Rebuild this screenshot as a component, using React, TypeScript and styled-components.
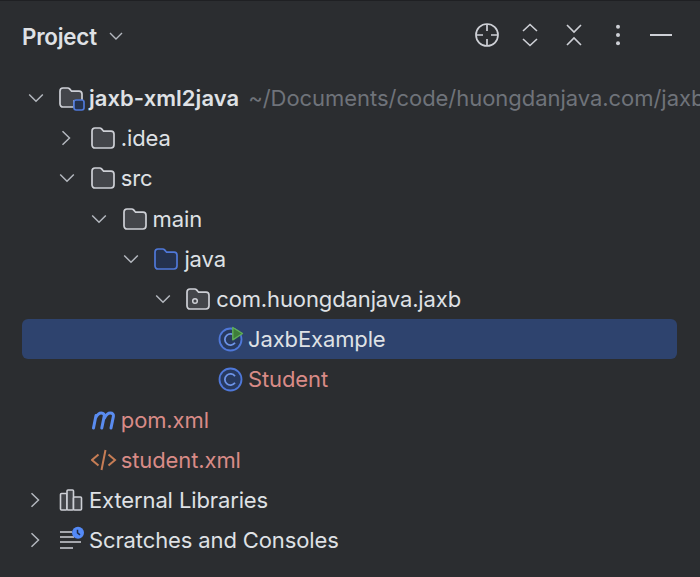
import React from "react";
import styled, { createGlobalStyle } from "styled-components";

const GlobalStyle = createGlobalStyle`
  html, body {
    margin: 0;
    padding: 0;
    height: 100%;
    overflow: hidden;
    background: #2b2d30;
  }
`;

const Panel = styled.div`
  width: 700px;
  height: 577px;
  overflow: hidden;
  background: #2b2d30;
  border-top: 1px solid #1f2023;
  box-sizing: border-box;
  font-family: Inter, "Liberation Sans", sans-serif;
  color: #dfe1e5;
`;

const Header = styled.div`
  display: flex;
  align-items: center;
  height: 70px;
  padding: 0 17px 0 22px;
`;

const Title = styled.div`
  font-size: 22.3px;
  font-weight: 600;
  letter-spacing: -0.2px;
`;

const TitleChevron = styled.div`
  display: flex;
  margin-left: 12px;
  color: #b4b8bf;
`;

const Toolbar = styled.div`
  display: flex;
  align-items: center;
  margin-left: auto;
  margin-bottom: 2px;
  color: #ced0d6;
`;

const ToolButton = styled.div`
  display: flex;
  align-items: center;
  justify-content: center;
  width: 43.6px;
  height: 30px;
`;

const Tree = styled.div`
  display: flex;
  flex-direction: column;
  margin: 7px 23px 0 22px;
`;

const Row = styled.div<{ $depth: number; $selected?: boolean }>`
  display: flex;
  align-items: center;
  height: 40.2px;
  flex-shrink: 0;
  padding-left: ${(p) => 3.5 + p.$depth * 31.8}px;
  border-radius: 6px;
  white-space: nowrap;
  background: ${(p) => (p.$selected ? "#2e436e" : "transparent")};
`;

const ChevronSlot = styled.div`
  display: flex;
  justify-content: center;
  align-items: center;
  flex-shrink: 0;
  width: 20px;
  height: 20px;
  margin-right: 13.5px;
  color: #b4b8bf;
`;

const IconSlot = styled.div`
  display: flex;
  align-items: center;
  justify-content: flex-start;
  width: 30px;
  height: 30px;
  flex-shrink: 0;
`;

const Label = styled.span<{ $tone?: "normal" | "red"; $bold?: boolean }>`
  flex-shrink: 0;
  font-size: 22px;
  letter-spacing: ${(p) => (p.$bold ? "0.05px" : "-0.12px")};
  font-weight: ${(p) => (p.$bold ? 600 : 400)};
  color: ${(p) => (p.$tone === "red" ? "#d98b87" : "#dfe1e5")};
`;

const Hint = styled.span`
  flex-shrink: 0;
  margin-left: 9px;
  font-size: 22px;
  letter-spacing: -0.04px;
  color: #6f737a;
`;

const Open = () => (
  <svg width="16" height="16" viewBox="0 0 16 16" fill="none" stroke="currentColor" strokeWidth="1.5">
    <path d="M1.2 4.500 8 11.200 14.800 4.500" />
  </svg>
);

const Closed = () => (
  <svg width="16" height="16" viewBox="0 0 16 16" fill="none" stroke="currentColor" strokeWidth="1.5">
    <path d="M3.500 1.200 10.500 8 3.500 14.800" />
  </svg>
);

const Folder = ({ stroke = "#ced0d6", fill = "#43454a" }: { stroke?: string; fill?: string }) => (
  <svg width="24" height="22" viewBox="0 0 24 22" fill={fill} stroke={stroke} strokeWidth="1.7">
    <path d="M1 4.200C1 2.400 2.200 1 4 1h4.600c.8 0 1.500.3 2 .9l2 2.300H20c1.800 0 3 1.300 3 3v10.600c0 1.800-1.200 3.200-3 3.200H4c-1.800 0-3-1.400-3-3.200Z" />
  </svg>
);

const ModuleFolder = () => (
  <svg width="26" height="26" viewBox="0 0 26 26">
    <path
      d="M1 6.200C1 4.400 2.200 3 4 3h4.600c.8 0 1.500.3 2 .9l2 2.300H20c1.800 0 3 1.300 3 3v6.800h-8v6H4c-1.800 0-3-1.400-3-3.200Z"
      fill="#43454a"
      stroke="#ced0d6"
      strokeWidth="1.700"
    />
    <rect x="15" y="15" width="10" height="10" rx="2.200" fill="#25324d" stroke="#4f78d9" strokeWidth="1.700" />
  </svg>
);

const PackageFolder = () => (
  <svg width="24" height="22" viewBox="0 0 24 22">
    <path
      d="M1 4.200C1 2.400 2.200 1 4 1h4.600c.8 0 1.500.3 2 .9l2 2.300H20c1.800 0 3 1.300 3 3v10.600c0 1.800-1.200 3.200-3 3.200H4c-1.800 0-3-1.400-3-3.200Z"
      fill="#43454a"
      stroke="#ced0d6"
      strokeWidth="1.700"
    />
    <circle cx="9" cy="13" r="2.300" fill="none" stroke="#ced0d6" strokeWidth="1.500" />
  </svg>
);

const ClassIcon = ({ run }: { run?: boolean }) => (
  <svg width="28" height="28" viewBox="0 0 28 28" fill="none" style={{ overflow: "visible" }}>
    <circle cx="12.500" cy="14.500" r="11" fill="#27395f" stroke="#4f78d9" strokeWidth="1.800" />
    <path d="M17 11.200a5.600 5.600 0 1 0 0 6.600" stroke="#6d93e6" strokeWidth="1.800" />
    {run && <path d="M14.800 2.500 24.500 8.500 14.800 14.800Z" fill="#3f7d3a" stroke="#5fae57" strokeWidth="1.400" strokeLinejoin="round" />}
  </svg>
);

const Maven = () => (
  <svg width="27" height="22" viewBox="0 0 27 22" fill="none" stroke="#5a8cf0" strokeWidth="3" strokeLinecap="round">
    <path d="M2.500 19 5 6.500M4.500 9C6.200 5.800 8.300 4 10.300 4c2.300 0 3.300 1.400 2.900 3.400L10.800 19M13.500 9c1.700-3.200 3.800-5 5.800-5 2.300 0 3.500 1.400 3.100 3.400L20 19" />
  </svg>
);

const XmlIcon = () => (
  <svg width="26" height="24" viewBox="0 0 26 24" fill="none" stroke="#c77d55" strokeWidth="2">
    <path d="M7.500 6.500 1 12l6.500 5.500M17.500 6.500 24 12l-6.500 5.500M14.500 2l-4 20" />
  </svg>
);

const Libraries = () => (
  <svg width="24" height="24" viewBox="0 0 24 24" fill="#43454a" stroke="#ced0d6" strokeWidth="1.600" strokeLinejoin="round">
    <rect x="1.500" y="5.500" width="6.500" height="16.500" rx="1" />
    <rect x="8" y="2" width="6.500" height="20" rx="1" />
    <rect x="14.500" y="9" width="8" height="13" rx="1" />
  </svg>
);

const Scratches = () => (
  <svg width="26" height="26" viewBox="0 0 26 26" fill="none" style={{ overflow: "visible" }}>
    <path d="M1 5h12M1 10h14M1 15h21M1 21h13" stroke="#ced0d6" strokeWidth="1.700" />
    <circle cx="19" cy="5.700" r="6" fill="#548af7" />
    <path d="M18.500 2.700v3.200l2.500 2" stroke="#1e2a44" strokeWidth="1.500" fill="none" />
  </svg>
);

function ProjectTree() {
  return (
    <Panel>
      <GlobalStyle />
      <Header>
        <Title>Project</Title>
        <TitleChevron>
          <svg width="14" height="14" viewBox="0 0 14 14" fill="none" stroke="currentColor" strokeWidth="1.400">
            <path d="M1 4 7 10 13 4" />
          </svg>
        </TitleChevron>
        <Toolbar>
          <ToolButton>
            <svg width="26" height="26" viewBox="0 0 26 26" fill="none" stroke="currentColor" strokeWidth="1.700">
              <circle cx="13" cy="13" r="11" />
              <path d="M13 2v7M13 17v7M2 13h7M17 13h7" />
            </svg>
          </ToolButton>
          <ToolButton>
            <svg width="18" height="26" viewBox="0 0 18 26" fill="none" stroke="currentColor" strokeWidth="1.600">
              <path d="M2 9 9 2.500 16 9M2 17 9 23.500 16 17" />
            </svg>
          </ToolButton>
          <ToolButton>
            <svg width="18" height="26" viewBox="0 0 18 26" fill="none" stroke="currentColor" strokeWidth="1.600">
              <path d="M2 3 9 10 16 3M2 23 9 16 16 23" />
            </svg>
          </ToolButton>
          <ToolButton>
            <svg width="6" height="24" viewBox="0 0 6 24" fill="currentColor">
              <circle cx="3" cy="3.700" r="2" />
              <circle cx="3" cy="12" r="2" />
              <circle cx="3" cy="20.300" r="2" />
            </svg>
          </ToolButton>
          <ToolButton>
            <svg width="22" height="4" viewBox="0 0 22 4" fill="currentColor">
              <rect y="1" width="22" height="2" />
            </svg>
          </ToolButton>
        </Toolbar>
      </Header>
      <Tree>
        <Row $depth={0}>
          <ChevronSlot><Open /></ChevronSlot>
          <IconSlot><ModuleFolder /></IconSlot>
          <Label $bold>jaxb-xml2java</Label>
          <Hint>~/Documents/code/huongdanjava.com/jaxb-xml2java</Hint>
        </Row>
        <Row $depth={1}>
          <ChevronSlot><Closed /></ChevronSlot>
          <IconSlot><Folder /></IconSlot>
          <Label>.idea</Label>
        </Row>
        <Row $depth={1}>
          <ChevronSlot><Open /></ChevronSlot>
          <IconSlot><Folder /></IconSlot>
          <Label>src</Label>
        </Row>
        <Row $depth={2}>
          <ChevronSlot><Open /></ChevronSlot>
          <IconSlot><Folder /></IconSlot>
          <Label>main</Label>
        </Row>
        <Row $depth={3}>
          <ChevronSlot><Open /></ChevronSlot>
          <IconSlot><Folder stroke="#4f78d9" fill="#25324d" /></IconSlot>
          <Label>java</Label>
        </Row>
        <Row $depth={4}>
          <ChevronSlot><Open /></ChevronSlot>
          <IconSlot><PackageFolder /></IconSlot>
          <Label>com.huongdanjava.jaxb</Label>
        </Row>
        <Row $depth={5} $selected>
          <ChevronSlot />
          <IconSlot><ClassIcon run /></IconSlot>
          <Label>JaxbExample</Label>
        </Row>
        <Row $depth={5}>
          <ChevronSlot />
          <IconSlot><ClassIcon /></IconSlot>
          <Label $tone="red">Student</Label>
        </Row>
        <Row $depth={1}>
          <ChevronSlot />
          <IconSlot><Maven /></IconSlot>
          <Label $tone="red">pom.xml</Label>
        </Row>
        <Row $depth={1}>
          <ChevronSlot />
          <IconSlot><XmlIcon /></IconSlot>
          <Label $tone="red">student.xml</Label>
        </Row>
        <Row $depth={0}>
          <ChevronSlot><Closed /></ChevronSlot>
          <IconSlot><Libraries /></IconSlot>
          <Label>External Libraries</Label>
        </Row>
        <Row $depth={0}>
          <ChevronSlot><Closed /></ChevronSlot>
          <IconSlot><Scratches /></IconSlot>
          <Label>Scratches and Consoles</Label>
        </Row>
      </Tree>
    </Panel>
  );
}

export default ProjectTree;
